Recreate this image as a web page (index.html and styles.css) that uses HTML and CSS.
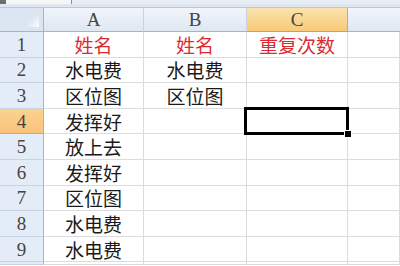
FILE: index.html
```html
<!DOCTYPE html>
<html lang="zh-CN">

<head>
    <meta charset="UTF-8">
    <meta name="viewport" content="width=device-width, initial-scale=1.0">
    <title>重复次数</title>
    <link rel="stylesheet" href="styles.css">
</head>

<body>
    <div class="topbar">
        <div class="name-box"></div>
        <div class="name-input"></div>
        <div class="formula"></div>
    </div>

    <div class="sheet">
        <div class="corner"><span class="corner-tri"></span></div>
        <div class="col-head">A</div>
        <div class="col-head">B</div>
        <div class="col-head active">C</div>
        <div class="col-head last"></div>

        <div class="row-head">1</div>
        <div class="cell red">姓名</div>
        <div class="cell red">姓名</div>
        <div class="cell red">重复次数</div>
        <div class="cell"></div>

        <div class="row-head">2</div>
        <div class="cell">水电费</div>
        <div class="cell">水电费</div>
        <div class="cell"></div>
        <div class="cell"></div>

        <div class="row-head">3</div>
        <div class="cell">区位图</div>
        <div class="cell">区位图</div>
        <div class="cell"></div>
        <div class="cell"></div>

        <div class="row-head active">4</div>
        <div class="cell">发挥好</div>
        <div class="cell"></div>
        <div class="cell selected"></div>
        <div class="cell"></div>

        <div class="row-head">5</div>
        <div class="cell">放上去</div>
        <div class="cell"></div>
        <div class="cell"></div>
        <div class="cell"></div>

        <div class="row-head">6</div>
        <div class="cell">发挥好</div>
        <div class="cell"></div>
        <div class="cell"></div>
        <div class="cell"></div>

        <div class="row-head">7</div>
        <div class="cell">区位图</div>
        <div class="cell"></div>
        <div class="cell"></div>
        <div class="cell"></div>

        <div class="row-head">8</div>
        <div class="cell">水电费</div>
        <div class="cell"></div>
        <div class="cell"></div>
        <div class="cell"></div>

        <div class="row-head">9</div>
        <div class="cell">水电费</div>
        <div class="cell"></div>
        <div class="cell"></div>
        <div class="cell"></div>

        <div class="row-head"></div>
        <div class="cell"></div>
        <div class="cell"></div>
        <div class="cell"></div>
        <div class="cell"></div>
    </div>
</body>

</html>
```

FILE: styles.css
```css
* {
    box-sizing: border-box;
}

body {
    margin: 0;
    width: 400px;
    height: 266px;
    overflow: hidden;
    background-color: #fff;
}

.topbar {
    display: flex;
    height: 8px;
    background-color: #dfe6ef;
    border-bottom: 1px solid #b8c8db;
}

.name-box {
    width: 6px;
    height: 4px;
    background-color: #6e6e6e;
}

.name-input {
    width: 66px;
    height: 4px;
    background-color: #f6f6f6;
    border-right: 1px solid #6f93c4;
}

.formula {
    flex: 1;
    height: 4px;
    background-color: #e8eef6;
}

.sheet {
    display: grid;
    grid-template-columns: 44px 100px 103px 101px 52px;
    grid-template-rows: 24px repeat(9, 25.6px) 3px;
    font-family: "Noto Sans CJK SC", sans-serif;
}

.corner {
    position: relative;
    background-color: #dce6f2;
    border-right: 1px solid #9eb6ce;
    border-bottom: 1px solid #9eb6ce;
}

.corner-tri {
    position: absolute;
    right: 4px;
    bottom: 4px;
    width: 17px;
    height: 14px;
    background: linear-gradient(135deg, #b9c9dc, #ffffff);
    clip-path: polygon(100% 0, 100% 100%, 0 100%);
}

.col-head,
.row-head {
    display: flex;
    align-items: center;
    justify-content: center;
    font-family: "Liberation Serif", serif;
    font-size: 19px;
    line-height: 1;
    color: #444;
}

.col-head {
    background: linear-gradient(#f1f5fb, #dfe7f2);
    border-right: 1px solid #c5d3e3;
    border-bottom: 1px solid #9eb6ce;
}

.col-head.active {
    background: linear-gradient(#fbe2ad, #f7cb78);
    border-right-color: #d8a95a;
    border-bottom-color: #c7a060;
}

.col-head.last {
    border-right: none;
}

.row-head {
    background-color: #e4ecf7;
    border-right: 1px solid #9eb6ce;
    border-bottom: 1px solid #c5d3e3;
}

.row-head.active {
    background: linear-gradient(#fbd28f, #f9c37a);
    border-bottom-color: #d8a95a;
}

.cell {
    display: flex;
    align-items: center;
    justify-content: center;
    font-size: 19px;
    line-height: 1;
    color: #1a1a1a;
    border-right: 1px solid #dadcdd;
    border-bottom: 1px solid #dadcdd;
}

.cell.red {
    color: #dc2b30;
}

.cell.selected {
    position: relative;
}

.cell.selected::before {
    content: "";
    position: absolute;
    left: -3px;
    top: -2px;
    right: -2px;
    bottom: -2px;
    border: 3px solid #000;
    z-index: 1;
}

.cell.selected::after {
    content: "";
    position: absolute;
    right: -5px;
    bottom: -5px;
    width: 6px;
    height: 6px;
    background-color: #000;
    border: 1px solid #fff;
    z-index: 2;
}
```
